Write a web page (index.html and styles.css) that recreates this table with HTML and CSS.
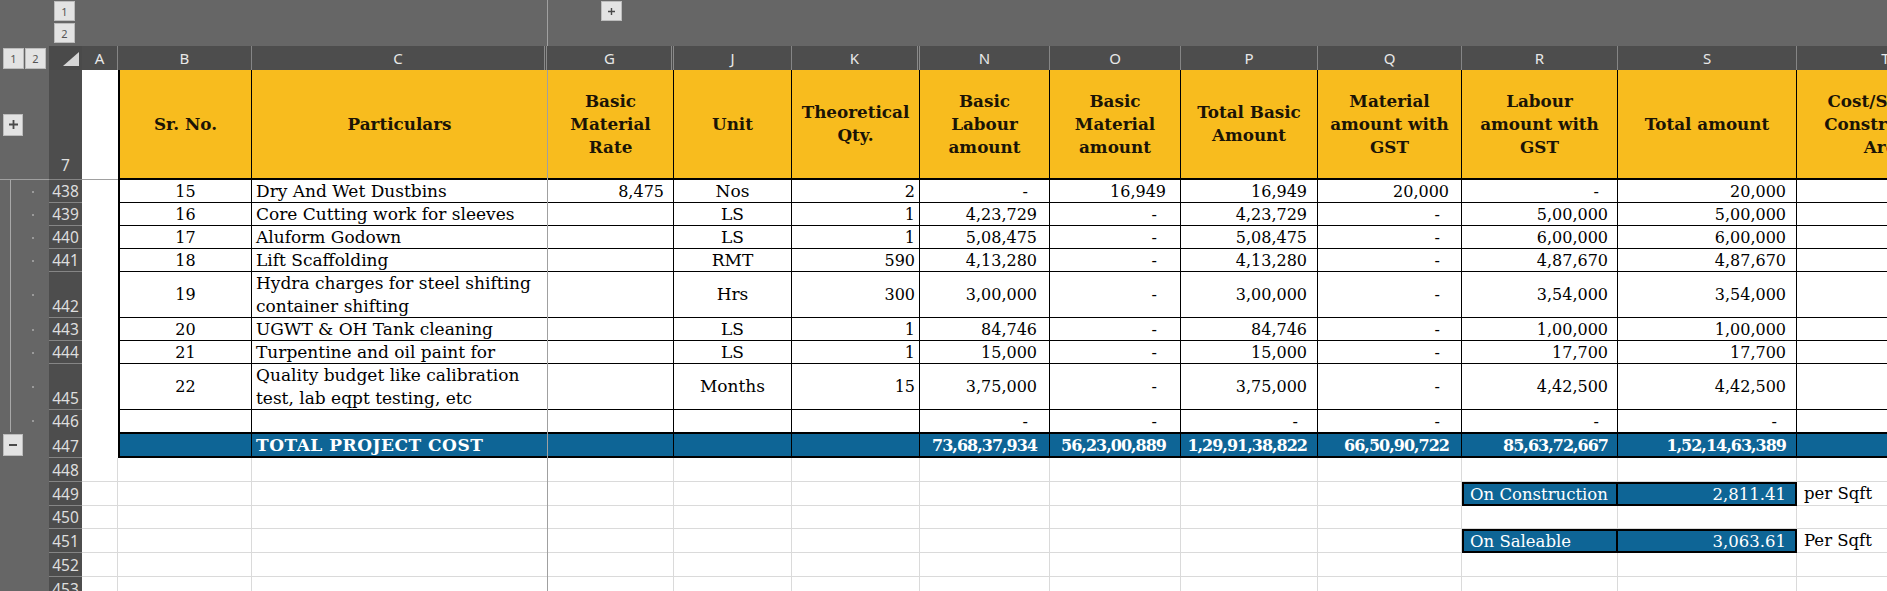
FILE: index.html
```html
<!DOCTYPE html>
<html>
<head>
<meta charset="utf-8">
<title>Project Cost</title>
<link rel="stylesheet" href="styles.css">
</head>
<body>
<div class="sheet">
  <div class="r top">
    <div></div>
    <div class="lv"><b class="btn">1</b><b class="btn">2</b></div>
    <div class="s3"></div>
    <div class="fz"></div>
    <div class="s10"><b class="btn pl"><svg width="9" height="9" viewBox="0 0 9 9"><path d="M4.5 1v7M1 4.5h7" stroke="#4a4a4a" stroke-width="1.4"/></svg></b></div>
  </div>
  <div class="r ch">
    <div><b class="btn">1</b><b class="btn">2</b></div>
    <div class="corner"><svg width="33" height="24" viewBox="0 0 33 24"><polygon points="30,6 30,20 14,20" fill="#d6d6d6"/></svg></div>
    <div>A</div><div>B</div><div class="dbl">C</div><div class="fz"></div><div class="dbl">G</div><div>J</div><div class="dbl">K</div><div>N</div><div>O</div><div>P</div><div>Q</div><div>R</div><div>S</div><div>T</div>
  </div>
  <div class="r hd">
    <div><b class="btn big"><svg width="11" height="11" viewBox="0 0 11 11"><path d="M5.5 1v9M1 5.5h9" stroke="#4a4a4a" stroke-width="1.8"/></svg></b></div>
    <div class="rh">7</div>
    <div></div>
    <div><span>Sr. No.</span></div>
    <div><span>Particulars</span></div>
    <div class="fz"></div>
    <div><span>Basic<br>Material<br>Rate</span></div>
    <div><span>Unit</span></div>
    <div><span>Theoretical<br>Qty.</span></div>
    <div><span>Basic<br>Labour<br>amount</span></div>
    <div><span>Basic<br>Material<br>amount</span></div>
    <div><span>Total Basic<br>Amount</span></div>
    <div><span>Material<br>amount with<br>GST</span></div>
    <div><span>Labour<br>amount with<br>GST</span></div>
    <div><span>Total amount</span></div>
    <div><span>Cost/Sqft on<br>Construction<br>Area</span></div>
  </div>
  <div class="r d h23">
    <div class="g ln"><i></i></div><div class="rh">438</div><div></div>
    <div>15</div><div>Dry And Wet Dustbins</div><div class="fz"></div>
    <div>8,475</div><div>Nos</div><div>2</div><div><span class="z">-</span></div><div>16,949</div><div>16,949</div><div>20,000</div><div><span class="z">-</span></div><div>20,000</div><div></div>
  </div>
  <div class="r d h23">
    <div class="g ln"><i></i></div><div class="rh">439</div><div></div>
    <div>16</div><div>Core Cutting work for sleeves</div><div class="fz"></div>
    <div></div><div>LS</div><div>1</div><div>4,23,729</div><div><span class="z">-</span></div><div>4,23,729</div><div><span class="z">-</span></div><div>5,00,000</div><div>5,00,000</div><div></div>
  </div>
  <div class="r d h23">
    <div class="g ln"><i></i></div><div class="rh">440</div><div></div>
    <div>17</div><div>Aluform Godown</div><div class="fz"></div>
    <div></div><div>LS</div><div>1</div><div>5,08,475</div><div><span class="z">-</span></div><div>5,08,475</div><div><span class="z">-</span></div><div>6,00,000</div><div>6,00,000</div><div></div>
  </div>
  <div class="r d h23">
    <div class="g ln"><i></i></div><div class="rh">441</div><div></div>
    <div>18</div><div>Lift Scaffolding</div><div class="fz"></div>
    <div></div><div>RMT</div><div>590</div><div>4,13,280</div><div><span class="z">-</span></div><div>4,13,280</div><div><span class="z">-</span></div><div>4,87,670</div><div>4,87,670</div><div></div>
  </div>
  <div class="r d h46">
    <div class="g ln"><i></i></div><div class="rh">442</div><div></div>
    <div>19</div><div><span>Hydra charges for steel shifting<br>container shifting</span></div><div class="fz"></div>
    <div></div><div>Hrs</div><div>300</div><div>3,00,000</div><div><span class="z">-</span></div><div>3,00,000</div><div><span class="z">-</span></div><div>3,54,000</div><div>3,54,000</div><div></div>
  </div>
  <div class="r d h23">
    <div class="g ln"><i></i></div><div class="rh">443</div><div></div>
    <div>20</div><div>UGWT &amp; OH Tank cleaning</div><div class="fz"></div>
    <div></div><div>LS</div><div>1</div><div>84,746</div><div><span class="z">-</span></div><div>84,746</div><div><span class="z">-</span></div><div>1,00,000</div><div>1,00,000</div><div></div>
  </div>
  <div class="r d h23">
    <div class="g ln"><i></i></div><div class="rh">444</div><div></div>
    <div>21</div><div>Turpentine and oil paint for</div><div class="fz"></div>
    <div></div><div>LS</div><div>1</div><div>15,000</div><div><span class="z">-</span></div><div>15,000</div><div><span class="z">-</span></div><div>17,700</div><div>17,700</div><div></div>
  </div>
  <div class="r d h46">
    <div class="g ln"><i></i></div><div class="rh">445</div><div></div>
    <div>22</div><div><span>Quality budget like calibration<br>test, lab eqpt testing, etc</span></div><div class="fz"></div>
    <div></div><div>Months</div><div>15</div><div>3,75,000</div><div><span class="z">-</span></div><div>3,75,000</div><div><span class="z">-</span></div><div>4,42,500</div><div>4,42,500</div><div></div>
  </div>
  <div class="r d h22 last">
    <div class="g ln"><i></i></div><div class="rh">446</div><div></div>
    <div></div><div></div><div class="fz"></div>
    <div></div><div></div><div></div><div><span class="z">-</span></div><div><span class="z">-</span></div><div><span class="z">-</span></div><div><span class="z">-</span></div><div><span class="z">-</span></div><div><span class="z">-</span></div><div></div>
  </div>
  <div class="r tot">
    <div><b class="btn big"><i class="mn"></i></b></div><div class="rh">447</div><div></div>
    <div></div><div>TOTAL PROJECT COST</div><div class="fz"></div>
    <div></div><div></div><div></div><div>73,68,37,934</div><div>56,23,00,889</div><div>1,29,91,38,822</div><div>66,50,90,722</div><div>85,63,72,667</div><div>1,52,14,63,389</div><div></div>
  </div>
  <div class="r e h24">
    <div></div><div class="rh">448</div><div></div><div></div><div></div><div class="fz"></div><div></div><div></div><div></div><div></div><div></div><div></div><div></div><div></div><div></div><div></div>
  </div>
  <div class="r e h24">
    <div></div><div class="rh">449</div><div></div><div></div><div></div><div class="fz"></div><div></div><div></div><div></div><div></div><div></div><div></div><div></div><div class="bx">On Construction</div><div class="bx">2,811.41</div><div class="note">per Sqft</div>
  </div>
  <div class="r e h23">
    <div></div><div class="rh">450</div><div></div><div></div><div></div><div class="fz"></div><div></div><div></div><div></div><div></div><div></div><div></div><div></div><div></div><div></div><div></div>
  </div>
  <div class="r e h24">
    <div></div><div class="rh">451</div><div></div><div></div><div></div><div class="fz"></div><div></div><div></div><div></div><div></div><div></div><div></div><div></div><div class="bx">On Saleable</div><div class="bx">3,063.61</div><div class="note">Per Sqft</div>
  </div>
  <div class="r e h24">
    <div></div><div class="rh">452</div><div></div><div></div><div></div><div class="fz"></div><div></div><div></div><div></div><div></div><div></div><div></div><div></div><div></div><div></div><div></div>
  </div>
  <div class="r e h24">
    <div></div><div class="rh">453</div><div></div><div></div><div></div><div class="fz"></div><div></div><div></div><div></div><div></div><div></div><div></div><div></div><div></div><div></div><div></div>
  </div>
</div>
</body>
</html>
```

FILE: styles.css
```css
html, body {
  margin: 0;
  padding: 0;
  overflow: hidden;
  background: #666666;
}
.sheet {
  width: 1975px;
  background: #666666;
  font-family: "DejaVu Serif", "Liberation Serif", serif;
  font-size: 17px;
  color: #000;
}
.r {
  display: grid;
  grid-template-columns: 49px 33px 36px 134px 295px 1px 126px 118px 128px 130px 131px 137px 144px 156px 179px 178px;
}
.r > * {
  box-sizing: border-box;
  min-width: 0;
  overflow: hidden;
  white-space: nowrap;
}
.h22 { height: 22px; }
.h23 { height: 23px; }
.h24 { height: 24px; }
.h46 { height: 46px; }

.fz { background: #a0a0a0; }

/* outline buttons */
.btn {
  display: flex;
  align-items: center;
  justify-content: center;
  width: 21px;
  height: 20px;
  box-sizing: border-box;
  background: #e3e3e3;
  border: 1px solid #bcbcbc;
  color: #555;
  font: 11px "Noto Sans", sans-serif;
  font-weight: normal;
}
.btn.big { width: 20px; height: 22px; }
.mn { display: block; width: 8px; height: 2px; background: #4a4a4a; }

/* top outline bar */
.top { height: 46px; }
.top > * { background: #666666; }
.top > .fz { background: #a0a0a0; }
.s3 { grid-column: span 3; }
.s10 { grid-column: span 10; }
.lv {
  display: flex;
  flex-direction: column;
  gap: 2px;
  padding: 1px 0 0 5px;
}
.pl { margin: 1px 0 0 53px; }

/* column headers */
.ch { height: 24px; }
.ch > * {
  background: #4d4d4d;
  color: #e8e8e8;
  font: 15px "Noto Sans", sans-serif;
  display: flex;
  align-items: center;
  justify-content: center;
  border-right: 1px solid #858585;
}
.ch > :first-child {
  background: #666666;
  border: 0;
  justify-content: flex-start;
  gap: 1px;
  padding-left: 3px;
}
.ch > :first-child .btn { height: 21px; }
.ch > .corner { background: #4a4a4a; border-right: 0; display: block; }
.ch > .corner svg { display: block; }
.ch > .fz { background: #4d4d4d; border: 0; }
.ch > .dbl { border-right: 3px double #8a8a8a; }

/* row headers */
.r > .rh {
  background: #4d4d4d;
  color: #dedede;
  font: 15.5px "Noto Sans", sans-serif;
  display: flex;
  align-items: flex-end;
  justify-content: center;
  border-bottom: 1px solid #858585;
  padding-bottom: 1px;
  line-height: 20px;
}

/* gutter outline line */
.g.ln {
  margin-left: 10px;
  border-left: 1px solid #a8a8a8;
  display: flex;
  align-items: center;
  justify-content: flex-end;
  padding-right: 15px;
}
.g.ln i { display: block; width: 2px; height: 2px; background: #9a9a9a; }

/* header row (row 7) */
.hd { height: 110px; }
.hd > :first-child {
  display: flex;
  align-items: center;
  padding-left: 3px;
  border-bottom: 1px solid #a0a0a0;
}
.r.hd > .rh { padding-bottom: 4px; }
.hd > :nth-child(3) { background: #fff; border-bottom: 1px solid #a0a0a0; }
.hd > :nth-child(n+4):not(.fz) {
  background: #f8bc1e;
  color: #1b1406;
  border-right: 1px solid #000;
  border-bottom: 2px solid #000;
  display: flex;
  align-items: center;
  justify-content: center;
  text-align: center;
  font-weight: bold;
  font-size: 16.8px;
  line-height: 23px;
}
.hd > :nth-child(4):not(.fz) { border-left: 2px solid #000; }
.hd > :nth-child(5):not(.fz) { border-right: 0; }

/* data rows */
.d > :nth-child(3) { background: #fff; }
.d > :nth-child(n+4):not(.fz) {
  background: #fff;
  border-right: 1px solid #000;
  border-bottom: 1px solid #000;
  display: flex;
  align-items: center;
  justify-content: flex-end;
  line-height: 23px;
  font-size: 16px;
}
.d > :nth-child(4):not(.fz) { justify-content: center; border-left: 2px solid #000; }
.d > :nth-child(5):not(.fz) { justify-content: flex-start; padding-left: 4px; border-right: 0; font-size: 17px; }
.d > :nth-child(8):not(.fz) { justify-content: center; font-size: 17px; }
.d.last > * { border-bottom: 0 !important; }
.z { margin-right: 9px; }

.d > :nth-child(7), .tot > :nth-child(7) { padding-right: 9px; }
.d > :nth-child(9), .tot > :nth-child(9) { padding-right: 4px; }
.d > :nth-child(10), .tot > :nth-child(10) { padding-right: 12px; }
.d > :nth-child(11), .tot > :nth-child(11) { padding-right: 14px; }
.d > :nth-child(12), .tot > :nth-child(12) { padding-right: 10px; }
.d > :nth-child(13), .tot > :nth-child(13) { padding-right: 12px; }
.d > :nth-child(14), .tot > :nth-child(14) { padding-right: 9px; }
.d > :nth-child(15), .tot > :nth-child(15) { padding-right: 10px; }

/* total row */
.tot { height: 26px; }
.tot > :first-child { display: flex; align-items: center; padding-left: 3px; }
.tot > :nth-child(3) { background: #fff; }
.tot > :nth-child(n+4):not(.fz) {
  background: #0e6596;
  color: #fff;
  font-weight: bold;
  font-size: 16px;
  border-top: 2px solid #000;
  border-bottom: 2px solid #000;
  border-right: 1px solid #000;
  display: flex;
  align-items: center;
  justify-content: flex-end;
  letter-spacing: -1px;
}
.tot > :nth-child(4):not(.fz) { border-left: 2px solid #000; }
.tot > :nth-child(5):not(.fz) {
  justify-content: flex-start;
  padding-left: 4px;
  border-right: 0;
  font-size: 17px;
  letter-spacing: 0.5px;
}

/* empty grid rows */
.e > :nth-child(n+3):not(.fz) {
  background: #fff;
  border-right: 1px solid #dadada;
  border-bottom: 1px solid #dadada;
  display: flex;
  align-items: center;
  font-size: 16.5px;
}
.e > :nth-child(5):not(.fz) { border-right: 0; }
.e > .bx:nth-child(14):not(.fz) {
  background: #0e6596;
  color: #fff;
  border: 2px solid #000;
  padding-left: 6px;
}
.e > .bx:nth-child(15):not(.fz) {
  background: #0e6596;
  color: #fff;
  border: 2px solid #000;
  border-left: 0;
  justify-content: flex-end;
  padding-right: 9px;
}
.e > .note:not(.fz) { padding-left: 7px; }
```
